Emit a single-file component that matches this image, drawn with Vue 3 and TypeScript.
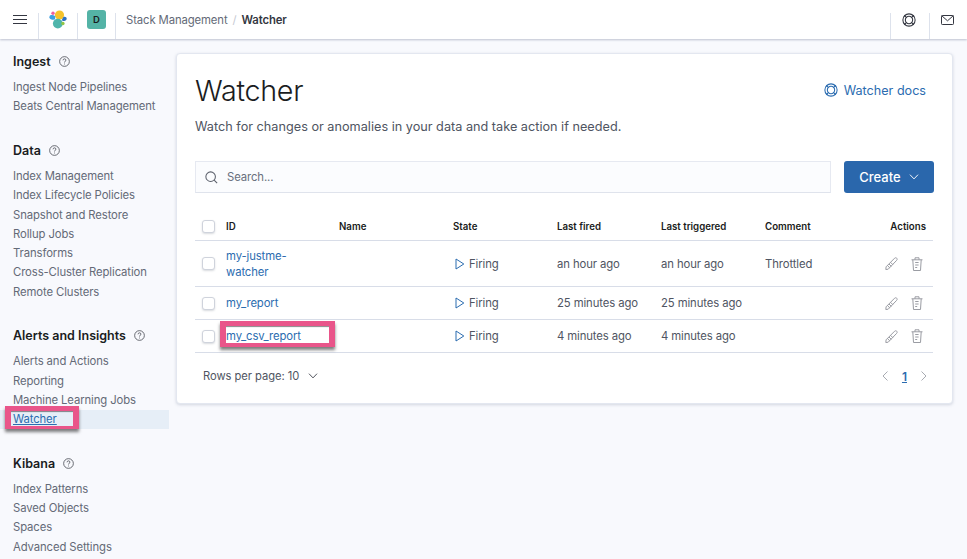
<script setup lang="ts">
interface NavGroup { title: string; items: string[] }
interface Row { id: string; fired: string; triggered: string; comment: string; tall?: boolean; marked?: boolean }

const groups: NavGroup[] = [
  { title: 'Ingest', items: ['Ingest Node Pipelines', 'Beats Central Management'] },
  { title: 'Data', items: ['Index Management', 'Index Lifecycle Policies', 'Snapshot and Restore', 'Rollup Jobs', 'Transforms', 'Cross-Cluster Replication', 'Remote Clusters'] },
  { title: 'Alerts and Insights', items: ['Alerts and Actions', 'Reporting', 'Machine Learning Jobs', 'Watcher'] },
  { title: 'Kibana', items: ['Index Patterns', 'Saved Objects', 'Spaces', 'Advanced Settings'] },
]

const rows: Row[] = [
  { id: 'my-justme-watcher', fired: 'an hour ago', triggered: 'an hour ago', comment: 'Throttled', tall: true },
  { id: 'my_report', fired: '25 minutes ago', triggered: '25 minutes ago', comment: '' },
  { id: 'my_csv_report', fired: '4 minutes ago', triggered: '4 minutes ago', comment: '', marked: true },
]
</script>

<template>
  <div class="page">
    <header class="top">
      <button class="burger" aria-label="Menu"><span></span><span></span><span></span></button>
      <i class="sep sep-a"></i>
      <svg class="logo" width="18" height="19" viewBox="0 0 18 19">
        <circle cx="10.500" cy="5" r="4.600" fill="#f5c32c" />
        <circle cx="8.800" cy="13.600" r="4.900" fill="#4fb5ab" />
        <path d="M1 5.600c1.600-.9 3.400-.5 5.400.6L6 9.600C4 10 .5 9.600.4 7.400.4 6.600.6 6 1 5.600z" fill="#3b9fe0" />
        <circle cx="4" cy="3.300" r="1.700" fill="#ee5f9d" />
        <path d="M14.200 7.300c1.600-1.100 3.500-.2 3.500 1.500 0 1.500-1.700 2.600-3.500 2.100l-1.500-.6z" fill="#2d72c4" />
        <circle cx="13.900" cy="13.500" r="1.700" fill="#8fc547" />
      </svg>
      <i class="sep sep-b"></i>
      <div class="avatar">D</div>
      <i class="sep sep-c"></i>
      <nav class="crumbs"><span>Stack Management</span><em>/</em><b>Watcher</b></nav>
      <i class="sep sep-r"></i>
      <svg class="hdr-ring" width="14" height="14" viewBox="0 0 16 16" fill="none" stroke="#343741" stroke-width="1.200">
        <circle cx="8" cy="8" r="7" /><circle cx="8" cy="8" r="4.200" />
        <path d="M3 3l2.200 2.200M13 3l-2.200 2.200M3 13l2.200-2.200M13 13l-2.200-2.200" />
        <path d="M2.200 4l1.800-1.800M11.900 2.200L13.800 4M2.200 12l1.800 1.800M13.800 12l-1.800 1.800" />
      </svg>
      <i class="sep sep-m"></i>
      <svg class="hdr-mail" width="13" height="10" viewBox="0 0 13 10" fill="none" stroke="#343741">
        <rect x=".5" y=".5" width="12" height="9" rx=".8" /><path d="M.8.800L6.500 5.800 12.200.8" />
      </svg>
    </header>

    <div class="main">
      <aside class="side">
        <section v-for="g in groups" :key="g.title" class="group">
          <h3 class="group-title">
            {{ g.title }}
            <svg width="11" height="11" viewBox="0 0 12 12" fill="none" stroke="#4b4f58" stroke-width=".9">
              <circle cx="6" cy="6" r="5.300" />
              <path d="M4.400 4.700C4.400 3.700 5.100 3.100 6 3.100s1.600.6 1.600 1.400c0 1.200-1.600 1.200-1.600 2.600" />
              <path d="M6 8.300v.9" />
            </svg>
          </h3>
          <a v-for="item in g.items" :key="item" class="nav-item" :class="{ active: item === 'Watcher' }">
            <span class="nav-label">{{ item }}</span>
            <i v-if="item === 'Watcher'" class="mark mark-nav"></i>
          </a>
        </section>
      </aside>

      <main class="card">
        <div class="title-row">
          <h1>Watcher</h1>
          <a class="docs">
            <svg width="14" height="14" viewBox="0 0 16 16" fill="none" stroke="#2b6cb0" stroke-width="1.200">
              <circle cx="8" cy="8" r="7" /><circle cx="8" cy="8" r="4.200" />
              <path d="M3 3l2.200 2.200M13 3l-2.200 2.200M3 13l2.200-2.200M13 13l-2.200-2.200" />
              <path d="M2.200 4l1.800-1.800M11.900 2.200L13.800 4M2.200 12l1.800 1.800M13.800 12l-1.800 1.800" />
            </svg>
            Watcher docs
          </a>
        </div>
        <p class="lead">Watch for changes or anomalies in your data and take action if needed.</p>

        <div class="tools">
          <div class="search">
            <svg width="13" height="13" viewBox="0 0 15 15" fill="none" stroke="#5a5f6a" stroke-width="1.200">
              <circle cx="6.500" cy="6.500" r="5.500" /><path d="M10.500 10.500l3.500 3.500" />
            </svg>
            <span>Search...</span>
          </div>
          <button class="create">
            Create
            <svg width="10" height="6" viewBox="0 0 11 7" fill="none" stroke="#fff" stroke-width="1.100"><path d="M.8.800l4.700 4.900L10.200.8" /></svg>
          </button>
        </div>

        <div class="table">
          <div class="tr head">
            <span class="cell-check"><i class="box"></i></span>
            <span>ID</span><span>Name</span><span>State</span><span>Last fired</span><span>Last triggered</span><span>Comment</span>
            <span class="right">Actions</span>
          </div>
          <div v-for="r in rows" :key="r.id" class="tr" :class="{ tall: r.tall }">
            <span class="cell-check"><i class="box"></i></span>
            <span class="id-cell">
              <a class="link" :class="{ narrow: r.tall }">{{ r.id }}</a>
              <i v-if="r.marked" class="mark mark-row"></i>
            </span>
            <span></span>
            <span class="state">
              <svg width="10" height="12" viewBox="0 0 10 12" fill="none" stroke="#2b6cb0"><path d="M1 1l7.800 5L1 11z" stroke-linejoin="round" /></svg>
              Firing
            </span>
            <span>{{ r.fired }}</span>
            <span>{{ r.triggered }}</span>
            <span>{{ r.comment }}</span>
            <span class="actions">
              <svg width="13" height="13" viewBox="0 0 13 13" fill="none" stroke="#9a9ca3">
                <path d="M3.200 12.200L.8 12.500l.3-2.700L9.600 1.200c.6-.6 1.500-.6 2.100 0 .6.6.6 1.500 0 2.100z" />
                <path d="M2.400 8.500l2.400 2.400M4 7l2.300 2.400M5.600 5.400L8 7.800" />
              </svg>
              <svg width="12" height="14" viewBox="0 0 12 14" fill="none" stroke="#9a9ca3">
                <path d="M.5 2.800h11M4 2.800V.8h4v2M1.800 2.800l.7 10.700h7l.7-10.700" />
                <path d="M4.200 5.500h3.400M4.200 8h3.400M4.200 10.500h2" />
              </svg>
            </span>
          </div>
        </div>

        <div class="foot">
          <span class="rows">
            Rows per page: 10
            <svg width="10" height="6" viewBox="0 0 11 7" fill="none" stroke="#343741"><path d="M.8.800l4.700 4.900L10.200.8" /></svg>
          </span>
          <span class="pager">
            <svg width="6" height="10" viewBox="0 0 6 10" fill="none" stroke="#a8abb2"><path d="M5.500.5L1 5l4.500 4.500" /></svg>
            <b>1</b>
            <svg width="6" height="10" viewBox="0 0 6 10" fill="none" stroke="#a8abb2"><path d="M.5.500L5 5 .5 9.500" /></svg>
          </span>
        </div>
      </main>
    </div>
  </div>
</template>

<style>
html, body { margin: 0; overflow: hidden; }
</style>

<style scoped>
.page {
  width: 967px;
  height: 559px;
  overflow: hidden;
  background: #f8f9fd;
  font-family: Inter, "Liberation Sans", sans-serif;
  color: #343741;
  display: flex;
  flex-direction: column;
}
.top {
  height: 39px;
  flex: none;
  background: #fff;
  box-shadow: 0 1px 2px rgba(100, 110, 140, .4);
  display: flex;
  align-items: center;
  position: relative;
  z-index: 2;
}
.burger {
  width: 14px;
  margin-left: 13px;
  padding: 0;
  border: 0;
  background: none;
  display: flex;
  flex-direction: column;
  gap: 2.500px;
}
.burger span { height: 1.500px; background: #343741; display: block; }
.sep {
  align-self: flex-end;
  height: 26px;
  width: 1px;
  background: #dde2ec;
  flex: none;
}
.sep-a { margin-left: 11px; }
.logo { margin-left: 10px; }
.sep-b { margin-left: 10px; }
.avatar {
  width: 19px;
  height: 19px;
  margin-left: 9px;
  border-radius: 3px;
  background: #54b3a6;
  color: #1a1c21;
  font-size: 9.500px;
  font-weight: 600;
  display: flex;
  align-items: center;
  justify-content: center;
}
.sep-c { margin-left: 9px; }
.crumbs {
  margin-left: 10px;
  font-size: 11.300px;
  letter-spacing: -.1px;
  display: flex;
  gap: 5px;
  color: #646a77;
}
.crumbs em { font-style: normal; color: #c5c9d2; }
.crumbs b { font-weight: 600; color: #343741; }
.sep-r { margin-left: auto; }
.hdr-ring { margin-left: 11px; }
.sep-m { margin-left: 13px; }
.hdr-mail { margin-left: 11px; margin-right: 13px; }

.main { flex: 1; display: flex; min-height: 0; }
.side { width: 176px; flex: none; padding: 14px 0 0 0; box-sizing: border-box; }
.group { margin-bottom: 25.500px; }
.group-title {
  margin: 0 0 8px 13px;
  height: 17px;
  font-size: 12.500px;
  line-height: 17px;
  font-weight: 600;
  color: #1a1c21;
  display: flex;
  align-items: center;
  gap: 8px;
}
.nav-item {
  display: block;
  position: relative;
  height: 19.250px;
  line-height: 19.250px;
  padding-left: 13px;
  margin-right: 7px;
  font-size: 11.300px;
  letter-spacing: -.1px;
  white-space: nowrap;
  color: #646a77;
}
.nav-item.active { background: #e6eef7; color: #2b6cb0; }
.nav-item.active .nav-label { text-decoration: underline; position: relative; z-index: 1; }
.mark {
  position: absolute;
  border-style: solid;
  border-color: #e9558a;
  box-shadow: 0 3px 3px rgba(40, 40, 40, .6), inset 0 2px 1px -1px rgba(40, 40, 40, .55);
  box-sizing: border-box;
  pointer-events: none;
}
.mark-nav { left: 5px; top: -4px; width: 74px; height: 23px; border-width: 5px 6px 3px 6px; }
.mark-row { left: -6px; top: -7px; width: 115px; height: 26px; border-width: 5px 6px 4px 6px; }

.card {
  width: 777px;
  height: 351px;
  margin-top: 14px;
  box-sizing: border-box;
  padding: 0 18px;
  background: #fff;
  border: 1px solid #e3e7f0;
  border-radius: 4px;
  box-shadow: 0 1px 3px rgba(100, 110, 140, .25);
}
.title-row { display: flex; align-items: center; justify-content: space-between; height: 44px; margin-top: 14px; padding-right: 8px; }
h1 { margin: 0; font-size: 28.700px; font-weight: 300; color: #1a1c21; letter-spacing: -.01em; }
.docs { display: flex; align-items: center; gap: 6px; font-size: 12.600px; color: #2b6cb0; }
.lead { margin: 5px 0 0; font-size: 12.700px; line-height: 20px; color: #4f5562; }
.tools { display: flex; gap: 13px; margin-top: 24px; }
.search {
  flex: 1;
  height: 32px;
  box-sizing: border-box;
  background: #fbfcfe;
  border: 1px solid #e6e9f1;
  border-bottom-color: #dfe3ec;
  display: flex;
  align-items: center;
  gap: 9px;
  padding-left: 9px;
  font-size: 11.300px;
  letter-spacing: -.1px;
  color: #69707d;
}
.create {
  width: 90px;
  height: 32px;
  border: 0;
  border-radius: 3px;
  background: #2a67ac;
  color: #fff;
  font: 500 13px Inter, sans-serif;
  display: flex;
  align-items: center;
  justify-content: center;
  gap: 8px;
}
.table { margin-top: 20px; margin-right: 1px; font-size: 11.300px; letter-spacing: -.1px; }
.tr {
  display: grid;
  grid-template-columns: 31px 113px 114px 104px 104px 104px 1fr 60px;
  align-items: center;
  height: 33px;
  box-sizing: border-box;
  border-bottom: 1px solid #d8dde8;
  color: #4f5562;
}
.tr.tall { height: 46px; }
.tr.head { height: 28px; font-size: 9.700px; letter-spacing: 0; font-weight: 600; color: #1a1c21; }
.cell-check { padding-left: 7px; display: flex; }
.box {
  width: 13px;
  height: 13px;
  box-sizing: border-box;
  background: #fff;
  border: 1px solid #cfd3dc;
  border-radius: 3px;
  box-shadow: 0 1px 2px rgba(60, 70, 90, .2);
}
.right { text-align: right; padding-right: 7px; }
.id-cell { position: relative; }
.link { color: #2b6cb0; display: block; line-height: 16px; }
.link.narrow { width: 70px; }
.state { display: flex; align-items: center; gap: 4px; }
.state svg { margin-left: 2px; }
.actions { display: flex; justify-content: flex-end; gap: 13px; padding-right: 10px; align-items: center; }
.foot { display: flex; justify-content: space-between; align-items: center; height: 46px; padding: 0 7px 0 8px; font-size: 11.200px; letter-spacing: -.05px; color: #4f5562; }
.rows { display: flex; align-items: center; gap: 9px; }
.pager { display: flex; align-items: center; gap: 14px; }
.pager b { color: #2b6cb0; text-decoration: underline; font-weight: 600; font-size: 12px; }
</style>
